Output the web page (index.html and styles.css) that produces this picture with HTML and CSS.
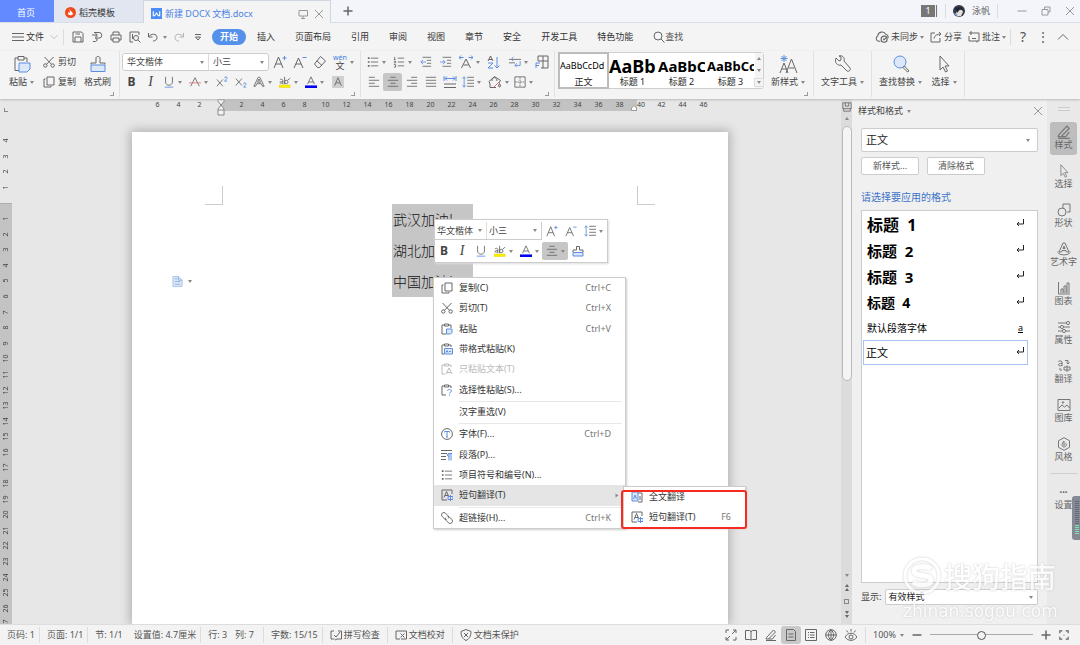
FILE: index.html
```html
<!DOCTYPE html>
<html lang="zh-CN">
<head>
<meta charset="utf-8">
<title>新建 DOCX 文档.docx</title>
<link rel="stylesheet" href="styles.css">
</head>
<body>
<svg class="sprite" aria-hidden="true">
  <symbol id="burger" viewBox="0 0 12 12"><path d="M0 2.500h12M0 6h12M0 9.500h12"/></symbol>
  <symbol id="chev-down" viewBox="0 0 12 12"><path d="M2 4l4 4 4-4"/></symbol>
  <symbol id="chev-up" viewBox="0 0 12 12"><path d="M1 8.500l5-5 5 5"/></symbol>
  <symbol id="save" viewBox="0 0 12 12"><path d="M1 1h8.500L11 2.500V11H1zM3 11V6h6v5M3.500 3h4.500"/></symbol>
  <symbol id="export" viewBox="0 0 12 12"><path d="M3 1.500h5a2.800 2.800 0 0 1 0 5.600H4.500M1 4h5M4.500 2.200L6.300 4 4.500 5.800M6.300 5.200L4.400 7.100l1.900 1.900M2 10.500h2.500l2-1.500"/></symbol>
  <symbol id="print" viewBox="0 0 12 12"><path d="M3 4V1h6v3M3 9H1V4h10v5H9M3 7h6v4H3z"/></symbol>
  <symbol id="preview" viewBox="0 0 12 12"><path d="M4 11H1V1h9v3M3.500 3v5"/><circle cx="7" cy="7" r="2.500"/><path d="M9 9l2.500 2.500"/></symbol>
  <symbol id="undo" viewBox="0 0 12 12"><path d="M1.500 2v4h4M1.500 6C4 2 10 2.500 10 6.500 10 9 8 10 6 10"/></symbol>
  <symbol id="redo" viewBox="0 0 12 12"><path d="M10.500 2v4h-4M10.500 6C8 2 2 2.500 2 6.500 2 9 4 10 6 10"/></symbol>
  <symbol id="more" viewBox="0 0 12 12"><path d="M3 3.500h6M3.500 6h5L6 9z"/></symbol>
  <symbol id="search" viewBox="0 0 12 12"><circle cx="5" cy="5" r="4"/><path d="M8 8l3.500 3.500"/></symbol>
  <symbol id="cloud" viewBox="0 0 13 12"><path d="M5 10H3.500A2.700 2.700 0 0 1 2.500 5 4 4 0 0 1 10 3.500C11.500 4 12.500 5.500 12 7"/><circle cx="8.500" cy="8" r="2.800"/><path d="M7.500 7.500l1 1 2-2"/></symbol>
  <symbol id="share" viewBox="0 0 12 12"><path d="M5 2H1v9h9V7M4 7.500C4.500 4.500 7 3 11 3M9 1l2 2-2 2"/></symbol>
  <symbol id="comment" viewBox="0 0 12 12"><path d="M5 2h6v8H1V5M3 0v4M1 2h4M4 7.500h4M9 10v1.500"/></symbol>
  <symbol id="scissors" viewBox="0 0 12 12"><circle cx="2.300" cy="9.500" r="1.700"/><circle cx="9.700" cy="9.500" r="1.700"/><path d="M3.500 8.300L10.500 1M8.500 8.300L1.500 1"/></symbol>
  <symbol id="copy" viewBox="0 0 12 12"><path d="M4 1h7v8H4zM2.500 3H1v8h7v-1"/></symbol>
  <symbol id="paste" viewBox="0 0 12 12"><path d="M3 2H1v9h4M8 2h2v3M3.500 1h4v2h-4z"/><path class="blue fill" d="M5.500 6H11v3.500L9.500 11h-4z"/></symbol>
  <symbol id="paste-fmt" viewBox="0 0 12 12"><path d="M3 2H1v9h2M8 2h2v2M3.500 1h4v2h-4z"/><path class="blue fill" d="M3.500 5.500h8V11h-8z"/><path class="blue" d="M5 9.500l1-2 1 2M8 8.500h2"/></symbol>
  <symbol id="paste-txt" viewBox="0 0 12 12"><path d="M3 2H1v9h3M8 2h2v2M3.500 1h4v2h-4zM5 11l3-6 3 6M6 9.500h4"/></symbol>
  <symbol id="paste-sp" viewBox="0 0 12 12"><path d="M3 2H1v9h4M8 2h2v2M3.500 1h4v2h-4z"/><path class="blue" d="M6.500 7c0-2 4-2 4 0 0 1.300-2 1.200-2 2.500M8.500 10.700v1"/></symbol>
  <symbol id="paste-big" viewBox="0 0 18 18"><path d="M5 3H2v12.500h4M11 3h3v4M5 1.500h6V5H5z"/><path class="blue fill" d="M6 8h11v6l-3 3H6z"/></symbol>
  <symbol id="brush" viewBox="0 0 18 18"><path d="M2 9.500V8h5V3c0-2 4-2 4 0v5h5v1.500"/><path class="blue fill" d="M2 10h14v6.500H2z"/></symbol>
  <symbol id="brush-sm" viewBox="0 0 12 12"><path d="M1 7V5h3.500V1.500h3V5H11v2"/><path class="blue fill" d="M1 7.500h10V11H1z"/></symbol>
  <symbol id="a-plus" viewBox="0 0 14 14"><path d="M1 13L5.500 2 10 13M2.800 9h5.400"/><path class="blue" d="M9.500 3h4M11.500 1v4"/></symbol>
  <symbol id="a-minus" viewBox="0 0 14 14"><path d="M1 13L5.500 3 10 13M2.800 9h5.400"/><path class="blue" d="M9.500 2.500h4"/></symbol>
  <symbol id="eraser" viewBox="0 0 14 14"><path d="M7.500 1.500l5 4.500-6 6.500h-2L1.500 9zM4 6l5 4.500"/></symbol>
  <symbol id="under" viewBox="0 0 14 14"><path d="M3 1v6c0 5 8 5 8 0V1"/><path class="blue" d="M2 13h10"/></symbol>
  <symbol id="strike" viewBox="0 0 14 14"><path d="M2 12L7 2l5 10"/><path class="red" d="M0 8h14"/></symbol>
  <symbol id="x-sup" viewBox="0 0 14 14"><path d="M1 4l7 8M8 4l-7 8"/><path class="blue" d="M10 2.500c0-2 3-2 3 0L10 6h3"/></symbol>
  <symbol id="x-sub" viewBox="0 0 14 14"><path d="M1 3l7 8M8 3l-7 8"/><path class="blue" d="M10 9.500c0-2 3-2 3 0L10 13h3"/></symbol>
  <symbol id="a-out" viewBox="0 0 14 14"><path d="M1 12L6 1.500h2L13 12h-2L9.700 9H4.300L3 12zM5.200 7.300h3.600L7 3.500z"/></symbol>
  <symbol id="hilite" viewBox="0 0 14 14"><path class="yellow" d="M0 10.500h13v3H0z"/><path d="M1 4.500c1-1.200 3.500-1 3.500 1v4M4.500 6.500c-4.500-.500-4.500 3 0 1.500M6.500 1v8.500"/><circle cx="8.500" cy="7" r="2"/><path d="M10 5l3-2.500"/></symbol>
  <symbol id="a-color" viewBox="0 0 14 14"><path d="M3 9.500L7 1l4 8.500M4.500 7h5"/><path class="ink" d="M0 11h14v3H0z"/></symbol>
  <symbol id="a-shade" viewBox="0 0 14 14"><path class="shade" d="M0 0h14v14H0z"/><path d="M3 11.500L7 2l4 9.500M4.500 8h5"/></symbol>
  <symbol id="bullets" viewBox="0 0 14 14"><path d="M4.500 2.500H13M4.500 7H13M4.500 11.500H13"/><path class="solid" d="M1 1.500h2v2H1zM1 6h2v2H1zM1 10.500h2v2H1z"/></symbol>
  <symbol id="numbers" viewBox="0 0 14 14"><path d="M5.500 2.500H13M5.500 7H13M5.500 11.500H13M2 1v3M1 4h2M1 6h2v2H1M1 10h2v3H1"/></symbol>
  <symbol id="outdent" viewBox="0 0 14 14"><path d="M3 1.500h10M8 5h5M8 8.500h5M3 12h10"/><path class="blue" d="M1 7h6M3.500 4.500L1 7l2.500 2.500"/></symbol>
  <symbol id="indent" viewBox="0 0 14 14"><path d="M3 1.500h10M8 5h5M8 8.500h5M3 12h10"/><path class="blue" d="M0 7h6M3.500 4.500L6 7 3.500 9.500"/></symbol>
  <symbol id="a-width" viewBox="0 0 14 14"><path d="M2.500 13L7 4l4.500 9M4.500 10h5"/><path class="blue" d="M0 2.500h4.500M2 .500l-2 2 2 2M9.500 2.500H14M12 .500l2 2-2 2"/></symbol>
  <symbol id="sort" viewBox="0 0 14 14"><path d="M1 6l2.500-5L6 6M2 4.500h3"/><path class="blue" d="M1 8h5l-5 5h5M10 2v11M7.500 10.500L10 13l2.500-2.500"/></symbol>
  <symbol id="wrap" viewBox="0 0 14 14"><path d="M0 4h14M0 8h7"/><path class="blue" d="M5 1L3 4l2 2M13 6v5H7M9 8.500L7 11l2 2"/></symbol>
  <symbol id="tabgrid" viewBox="0 0 14 14"><path d="M3 6V1h10v12H6M3 6h10M8 1v12"/><path class="blue" d="M1 13V8h4M1 10.500h3"/></symbol>
  <symbol id="al-l" viewBox="0 0 14 14"><path d="M1 1.500h7M1 5h12M1 8.500h7M1 12h12"/></symbol>
  <symbol id="al-c" viewBox="0 0 14 14"><path d="M4 1.500h6M1 5h12M4 8.500h6M1 12h12"/></symbol>
  <symbol id="al-r" viewBox="0 0 14 14"><path d="M6 1.500h7M1 5h12M6 8.500h7M1 12h12"/></symbol>
  <symbol id="al-j" viewBox="0 0 14 14"><path d="M1 1.500h12M1 5h12M1 8.500h12M1 12h12"/></symbol>
  <symbol id="al-d" viewBox="0 0 14 14"><path d="M1 9h12M1 12.500h12"/><path class="blue" d="M1 1v5M13 1v5M2 3.500h10M4 1.500l-2 2 2 2M10 1.500l2 2-2 2"/></symbol>
  <symbol id="spacing" viewBox="0 0 14 14"><path d="M6 1.500h8M6 5h8M6 8.500h8M6 12h8"/><path class="blue" d="M2.500 1v12M.500 3l2-2 2 2M.500 11l2 2 2-2"/></symbol>
  <symbol id="bucket" viewBox="0 0 14 14"><path d="M8 12.500H2V9L1 6.500 6.500 1.500l6 4L11 8M4 6c0-5 5-4 5 0M11.500 8.500c1.500 2 1 3.500 0 3.500s-1.500-1.500 0-3.500"/><path class="red" d="M6 12l5-5"/></symbol>
  <symbol id="borders" viewBox="0 0 14 14"><path d="M1 1h12v12H1z"/><path stroke-dasharray="2 1" d="M7 1v12M1 7h12"/></symbol>
  <symbol id="newstyle" viewBox="0 0 20 20"><path d="M2 18L6 8l4 10M3.500 14h5M8 18l5.500-14L19 18M10.500 13h6"/><path class="blue" d="M6 0v7M2.500 3.500h7M3.500 1l5 5M8.500 1l-5 5"/></symbol>
  <symbol id="wrench" viewBox="0 0 18 18"><path d="M2 3l3 3 2-1V2L5 1c3-1 6 1 5 5l6 7c1 2-1 4-3 3L7 10C4 11 0 8 2 3z"/></symbol>
  <symbol id="find" viewBox="0 0 18 18"><circle class="blue fill" cx="8" cy="7" r="6"/><path d="M12.500 11l4.500 5-1.500 1L11 12.500z"/></symbol>
  <symbol id="cursor" viewBox="0 0 18 18"><path d="M5 1l9 10h-4l2.500 5-2 1L8 12l-3 3z"/></symbol>
  <symbol id="font-t" viewBox="0 0 12 12"><circle cx="6" cy="6" r="5.400"/><path class="blue" d="M3.500 4.500V3.500h5v1M6 3.500V9M5 9h2"/></symbol>
  <symbol id="para" viewBox="0 0 12 12"><path d="M0 1.500h11M0 4.500h6M0 7.500h5M0 10.500h5"/><path class="blue" d="M8 4.500v7M10 4.500v7M11 4.500H8a1.500 1.500 0 0 0 0 3"/></symbol>
  <symbol id="trans" viewBox="0 0 12 12"><path d="M11 5V1H1v10h5M3 8.500l2.500-6 2 4.500M4 6.500h3"/><path class="blue" d="M7 7.500h5v3H7zM9.500 6v6"/></symbol>
  <symbol id="trans-all" viewBox="0 0 12 12"><path d="M7 2h4v9H7M9 5v4"/><path class="blue fill" d="M1 1h6v9H1z"/><path class="blue" d="M2.500 8L4 4l1.500 4"/></symbol>
  <symbol id="link" viewBox="0 0 12 12"><path d="M5.500 7.500L4 7.300 1.200 4.500a2.300 2.300 0 0 1 3.300-3.300L7 3.700c.900.900.700 1.900.300 2.600M6.500 4.500l1.500.200 2.800 2.800a2.300 2.300 0 0 1-3.300 3.300L5 8.300c-.900-.900-.700-1.900-.300-2.600"/></symbol>
  <symbol id="book" viewBox="0 0 12 12"><path d="M6 2v9M.500 1.500h4L6 2.500l1.500-1h4v9h-4L6 11l-1.500-.500h-4z"/></symbol>
  <symbol id="spell" viewBox="0 0 12 12"><path d="M4.500 10H1V2h3M8 2h3.500v8H7l-2 1M4 6l2 2 4-5"/></symbol>
  <symbol id="proof" viewBox="0 0 12 12"><path d="M5 10H1V2h10.500v8H6M5.500 4.500l4 4M9.500 4.500l-4 4"/></symbol>
  <symbol id="shield" viewBox="0 0 12 12"><path d="M6 .500l5 2c0 5-2 7.500-5 9-3-1.500-5-4-5-9zM4 4l4 4M8 4L4 8"/></symbol>
  <symbol id="expand" viewBox="0 0 12 12"><path d="M1 4V1h3M8 1h3v3M11 8v3H8M4 11H1V8M7 5l4-4M5 7l-4 4"/></symbol>
  <symbol id="pen" viewBox="0 0 12 12"><path d="M1.500 8.500L8.500 1l2 2-7 7H1zM3.500 10h4l3-4M1 11.500h10"/></symbol>
  <symbol id="page" viewBox="0 0 12 12"><path d="M1.500.500h7l2 2v9h-9zM3.500 5h5M3.500 8h5"/></symbol>
  <symbol id="outline" viewBox="0 0 12 12"><path d="M.500.500h11v11H.500zM3 3.500h1M5 3.500h4.500M3 6h1M5 6h4.500M3 8.500h1M5 8.500h4.500"/></symbol>
  <symbol id="globe" viewBox="0 0 12 12"><circle cx="6" cy="6" r="5.300"/><path d="M.700 6h10.600M6 .700v10.600M6 .700C2.500 4 2.500 8 6 11.300M6 .700C9.500 4 9.500 8 6 11.300"/></symbol>
  <symbol id="eye" viewBox="0 0 12 12"><path d="M0 8c3-5 9-5 12 0-3 4.500-9 4.500-12 0zM6 0v2.500M1.500 1.500l1.500 2M10.500 1.500L9 3.500"/><circle cx="6" cy="8" r="2"/></symbol>
  <symbol id="focus" viewBox="0 0 12 12"><path d="M1 4V1h3M8 1h3v3M11 8v3H8M4 11H1V8M5.500 6h1"/></symbol>
  <symbol id="minus" viewBox="0 0 12 12"><path d="M1.500 6h9"/></symbol>
  <symbol id="plus" viewBox="0 0 12 12"><path d="M1.500 6h9M6 1.500v9"/></symbol>
  <symbol id="close" viewBox="0 0 12 12"><path d="M2 2l8 8M10 2l-8 8"/></symbol>
  <symbol id="restore" viewBox="0 0 12 12"><path d="M2 4.500h6V10H2zM4.500 4.500V2H10v5H8"/></symbol>
  <symbol id="monitor" viewBox="0 0 12 12"><path d="M2 2.500h8.500V8H2zM6 8v2M4 10.500h4"/></symbol>
  <symbol id="shapes" viewBox="0 0 14 14"><path d="M6 5V1h7v8h-3"/><circle cx="5" cy="9" r="4"/></symbol>
  <symbol id="wordart" viewBox="0 0 14 14"><path d="M2 10L6 1h2l4 9H9.500L9 8.500H5L4.500 10zM6 6.500h2L7 4zM1 9.500c-1 4.500 13 4.500 12 0"/></symbol>
  <symbol id="chart" viewBox="0 0 14 14"><path d="M1.500 1v12H13M4 12V8h2v4M7 12V5h2v7M10 12V2h2v10"/></symbol>
  <symbol id="props" viewBox="0 0 14 14"><path d="M1 3h8M1 7h2M6.500 7H13M1 11h4M8.500 11H13"/><circle cx="11" cy="3" r="1.600"/><circle cx="5" cy="7" r="1.600"/><circle cx="7" cy="11" r="1.600"/></symbol>
  <symbol id="trans2" viewBox="0 0 14 14"><path d="M1.500 3c0-1.500 3.500-1.500 3.500 0v4M5 4.500c-5-.500-4.500 3.500 0 2M7 8h6v3H7zM10 6.500V13M8 1.500h3v3M9.500 3.500l1.500 1.500L12.500 3.500M3 9v2h2"/></symbol>
  <symbol id="picture" viewBox="0 0 14 14"><path d="M1 1.500h12v11H1zM2 10l3-3 2.500 2L10 7l2.500 3"/><circle cx="6" cy="4.500" r=".800"/></symbol>
  <symbol id="hex" viewBox="0 0 14 14"><path d="M7 .700l5.500 3v6.600l-5.500 3-5.500-3V3.700zM7 4v5"/><path d="M7 4C4 7 5 10 7 10s3-2 1.500-4"/></symbol>
  <symbol id="ret" viewBox="0 0 10 10"><path d="M8.500 1v5H2M4 4L2 6l2 2"/></symbol>
  <symbol id="disk" viewBox="0 0 12 12"><path d="M1 1h10v7H1zM4 1v4h4V1M2 8v3h8V8"/></symbol>
  <symbol id="dbl-down" viewBox="0 0 6 8"><path class="solid" d="M1 0h4L3 3zM1 4h4L3 7z"/></symbol>
  <symbol id="dbl-up" viewBox="0 0 6 8"><path class="solid" d="M1 3h4L3 0zM1 7h4L3 4z"/></symbol>
</svg>

<header class="titlebar">
  <button class="tab home">首页</button>
  <button class="tab store"><svg class="logo" viewBox="0 0 12 12"><circle cx="6" cy="6" r="6" fill="#f04a1d"/><path d="M5 2c1 3 4 4 3.500 6-.500 1.500-4 1.500-5 0C3 6 4 6 4.200 5c1 1 1 2 1.300 2C6.200 5 4.500 4 5 2z" fill="#fff"/></svg>稻壳模板</button>
  <div class="tab doc"><svg class="logo" viewBox="0 0 12 12"><path d="M0 0h12v12H0z" fill="#4c8df5"/><path d="M2.500 3.500v5H4l2-3 2 3h1.500v-5" fill="none" stroke="#fff" stroke-width="1.200"/></svg><span class="name">新建 DOCX 文档.docx</span>
    <button aria-label="显示"><svg class="i12"><use href="#monitor"/></svg></button><button aria-label="关闭标签"><svg class="i12"><use href="#close"/></svg></button></div>
  <button class="add" aria-label="新建"><svg class="i12"><use href="#plus"/></svg></button>
  <div class="account">
    <span class="badge">1</span><i class="vr"></i>
    <svg class="avatar" viewBox="0 0 12 12"><circle cx="6" cy="6" r="6" fill="#343847"/><path d="M4 5l5-1 1 3-2 4-4 .500L3 8z" fill="#e6ded9"/><path d="M2 3l6-1 3 4-4-1.500L4 8z" fill="#222638"/><path d="M1 8l3 1 1 3-3-2z" fill="#7ba2e3"/></svg>
    <span>泳帆</span><i class="vr"></i>
  </div>
  <div class="winctl"><button aria-label="最小化"><svg class="i12"><use href="#minus"/></svg></button><button aria-label="还原"><svg class="i12"><use href="#restore"/></svg></button><button aria-label="关闭"><svg class="i12"><use href="#close"/></svg></button></div>
</header>

<nav class="menubar">
  <button class="file"><svg class="i12"><use href="#burger"/></svg>文件</button>
  <button class="q pale" aria-label="展开"><svg class="i10"><use href="#chev-down"/></svg></button><i class="vr"></i>
  <div class="quick">
    <button class="q" aria-label="保存"><svg class="i12"><use href="#save"/></svg></button><button class="q" aria-label="输出"><svg class="i12"><use href="#export"/></svg></button><button class="q" aria-label="打印"><svg class="i12"><use href="#print"/></svg></button><button class="q" aria-label="预览"><svg class="i12"><use href="#preview"/></svg></button><button class="q drop" aria-label="撤销"><svg class="i12"><use href="#undo"/></svg><i class="caret"></i></button><button class="q pale" aria-label="恢复"><svg class="i12"><use href="#redo"/></svg></button><button class="q" aria-label="更多"><svg class="i12"><use href="#more"/></svg></button>
  </div>
  <button class="pill">开始</button>
  <div class="menus"><button>插入</button><button>页面布局</button><button>引用</button><button>审阅</button><button>视图</button><button>章节</button><button>安全</button><button>开发工具</button><button>特色功能</button><button class="lookup"><svg class="i12"><use href="#search"/></svg>查找</button></div>
  <div class="cloud">
    <button><svg class="i14"><use href="#cloud"/></svg>未同步<i class="caret"></i></button><button><svg class="i12"><use href="#share"/></svg>分享</button><button><svg class="i12"><use href="#comment"/></svg>批注<i class="caret"></i></button>
  </div><i class="vr"></i>
  <div class="help"><button class="question">?</button><button class="dots">⋮</button><button aria-label="收起"><svg class="i12"><use href="#chev-up"/></svg></button></div>
</nav>

<section class="ribbon">
  <div class="group clip">
    <button class="big"><svg class="i18"><use href="#paste-big"/></svg><span>粘贴<i class="caret"></i></span></button>
    <div class="pair"><button><svg class="i12"><use href="#scissors"/></svg>剪切</button><button><svg class="i12"><use href="#copy"/></svg>复制</button></div>
    <button class="big"><svg class="i18"><use href="#brush"/></svg><span>格式刷</span></button>
    <i class="corner"></i>
  </div>
  <div class="group font">
    <div class="row">
      <div class="combos"><label class="combo face"><select aria-label="字体"><option>华文楷体</option></select><i class="caret"></i></label><label class="combo size"><select aria-label="字号"><option>小三</option></select><i class="caret"></i></label></div>
      <button class="t wide" aria-label="增大字号"><svg class="i14"><use href="#a-plus"/></svg></button><button class="t wide" aria-label="减小字号"><svg class="i14"><use href="#a-minus"/></svg></button><button class="t wide" aria-label="清除格式"><svg class="i14"><use href="#eraser"/></svg></button><button class="t d"><span class="pinyin"><b>wén</b><span>文</span></span><i class="caret"></i></button>
    </div>
    <div class="row">
      <button class="t glyph"><b>B</b></button><button class="t glyph"><em>I</em></button><button class="t d" aria-label="下划线"><svg class="i12"><use href="#under"/></svg><i class="caret"></i></button><button class="t d" aria-label="删除线"><svg class="i12"><use href="#strike"/></svg><i class="caret"></i></button><button class="t" aria-label="上标"><svg class="i12"><use href="#x-sup"/></svg></button><button class="t" aria-label="下标"><svg class="i12"><use href="#x-sub"/></svg></button><button class="t d" aria-label="文字效果"><svg class="i12"><use href="#a-out"/></svg><i class="caret"></i></button><button class="t d" aria-label="突出显示"><svg class="i12"><use href="#hilite"/></svg><i class="caret"></i></button><button class="t d" aria-label="字体颜色"><svg class="i12"><use href="#a-color"/></svg><i class="caret"></i></button><button class="t" aria-label="字符底纹"><svg class="i12"><use href="#a-shade"/></svg></button>
    </div>
    <i class="corner"></i>
  </div>
  <div class="group paragraph">
    <div class="row">
      <button class="t d" aria-label="项目符号"><svg class="i12"><use href="#bullets"/></svg><i class="caret"></i></button><button class="t d" aria-label="编号"><svg class="i12"><use href="#numbers"/></svg><i class="caret"></i></button><button class="t wide" aria-label="减少缩进"><svg class="i12"><use href="#outdent"/></svg></button><button class="t wide" aria-label="增加缩进"><svg class="i12"><use href="#indent"/></svg></button><button class="t d" aria-label="中文版式"><svg class="i14"><use href="#a-width"/></svg><i class="caret"></i></button><button class="t wider" aria-label="排序"><svg class="i14"><use href="#sort"/></svg></button><button class="t d" aria-label="换行"><svg class="i12"><use href="#wrap"/></svg><i class="caret"></i></button><button class="t" aria-label="制表位"><svg class="i14"><use href="#tabgrid"/></svg></button>
    </div>
    <div class="row">
      <button class="t" aria-label="左对齐"><svg class="i12"><use href="#al-l"/></svg></button><button class="t on" aria-label="居中"><svg class="i12"><use href="#al-c"/></svg></button><button class="t" aria-label="右对齐"><svg class="i12"><use href="#al-r"/></svg></button><button class="t" aria-label="两端对齐"><svg class="i12"><use href="#al-j"/></svg></button><button class="t" aria-label="分散对齐"><svg class="i14"><use href="#al-d"/></svg></button><button class="t d" aria-label="行距"><svg class="i12"><use href="#spacing"/></svg><i class="caret"></i></button><button class="t d" aria-label="底纹"><svg class="i14"><use href="#bucket"/></svg><i class="caret"></i></button><button class="t d" aria-label="边框"><svg class="i12"><use href="#borders"/></svg><i class="caret"></i></button>
    </div>
    <i class="corner"></i>
  </div>
  <div class="group styles">
    <div class="gallery">
      <button class="current"><span class="sample">AaBbCcDd</span><span>正文</span></button>
      <button><span class="sample s1">AaBb</span><span>标题 1</span></button>
      <button><span class="sample s2">AaBbC</span><span>标题 2</span></button>
      <button><span class="sample s3">AaBbCc</span><span>标题 3</span></button>
      <div class="spin"><i class="caret up"></i><i class="caret"></i><i class="caret bar"></i></div>
    </div>
    <button class="big"><svg class="i20"><use href="#newstyle"/></svg><span>新样式<i class="caret"></i></span></button>
    <i class="corner"></i>
  </div>
  <div class="group tools"><button class="big"><svg class="i18"><use href="#wrench"/></svg><span>文字工具<i class="caret"></i></span></button></div>
  <div class="group tools"><button class="big"><svg class="i18"><use href="#find"/></svg><span>查找替换<i class="caret"></i></span></button><button class="big"><svg class="i18"><use href="#cursor"/></svg><span>选择<i class="caret"></i></span></button></div>
</section>

<main class="main">
  <div class="vruler"><span class="origin"></span>
    <div class="vticks"><span>4</span><span>3</span><span>2</span><span>1</span><span></span><span>1</span><span>2</span><span>3</span><span>4</span><span>5</span><span>6</span><span>7</span><span>8</span><span>9</span><span>10</span><span>11</span><span>12</span><span>13</span><span>14</span><span>15</span><span>16</span><span>17</span><span>18</span><span>19</span><span>20</span><span>21</span><span>22</span><span>23</span><span>24</span><span>25</span><span>26</span><span>27</span></div>
  </div>
  <div class="work">
    <div class="hruler"><span>6</span><span>4</span><span>2</span><span class="zero"><svg viewBox="0 0 10 18"><path d="M2 .500h6v2L5 6 2 2.500zM5 6l3 4v6H2v-6zM2 11h6"/></svg></span><span>2</span><span>4</span><span>6</span><span>8</span><span>10</span><span>12</span><span>14</span><span>16</span><span>18</span><span>20</span><span>22</span><span>24</span><span>26</span><span>28</span><span>30</span><span>32</span><span>34</span><span>36</span><span>38</span><span class="end"><svg viewBox="0 0 6 6"><path d="M.500 5.500V3L3 .500 5.500 3v2.500z"/></svg>40</span><span>42</span><span>44</span><span>46</span></div>
    <article class="page">
      <div class="margins"><i class="crop left"></i><i class="crop right"></i></div>
      <div class="text"><p>武汉加油!</p><p>湖北加油!</p><p>中国加油!</p></div>
      <div class="pasteopt"><svg viewBox="0 0 12 12"><path d="M1 .500h6l4 4v7H1z" fill="#dbe6f7" stroke="#a9c2e8"/><path d="M3 3h3M3 6h6M3 9h6M7 .500v4h4" stroke="#8fb0e0" fill="none"/></svg><i class="caret"></i></div>
    </article>
  </div>
  <div class="scroll">
    <svg class="i10"><use href="#disk"/></svg><i class="caret up"></i><div class="thumb"></div>
    <div class="jump"><i class="caret"></i><svg><use href="#dbl-up"/></svg><i class="dot"></i><svg><use href="#dbl-down"/></svg></div>
  </div>
  <aside class="panel">
    <div class="head"><span>样式和格式<i class="caret"></i></span><button aria-label="关闭窗格"><svg class="i12"><use href="#close"/></svg></button></div>
    <label class="combo current-style"><select aria-label="当前样式"><option>正文</option></select><i class="caret"></i></label>
    <div class="actions"><button>新样式...</button><button>清除格式</button></div>
    <h2>请选择要应用的格式</h2>
    <ul class="list">
      <li class="h h1"><span>标题&nbsp; 1</span><svg><use href="#ret"/></svg></li>
      <li class="h h2"><span>标题&nbsp; 2</span><svg><use href="#ret"/></svg></li>
      <li class="h h3"><span>标题&nbsp; 3</span><svg><use href="#ret"/></svg></li>
      <li class="h h4"><span>标题&nbsp; 4</span><svg><use href="#ret"/></svg></li>
      <li class="dflt"><span>默认段落字体</span><u>a</u></li>
      <li class="sel"><span>正文</span><svg><use href="#ret"/></svg></li>
    </ul>
    <div class="show"><label for="show">显示:</label><span class="combo"><select id="show"><option>有效样式</option></select><i class="caret"></i></span></div>
  </aside>
  <nav class="side">
    <i class="grip"></i>
    <button class="on"><svg class="i14"><use href="#pen"/></svg>样式</button>
    <button><svg class="i14"><use href="#cursor"/></svg>选择</button>
    <button><svg class="i14"><use href="#shapes"/></svg>形状</button>
    <button><svg class="i14"><use href="#wordart"/></svg>艺术字</button>
    <button><svg class="i14"><use href="#chart"/></svg>图表</button>
    <button><svg class="i14"><use href="#props"/></svg>属性</button>
    <button><svg class="i14"><use href="#trans2"/></svg>翻译</button>
    <button><svg class="i14"><use href="#picture"/></svg>图库</button>
    <button><svg class="i14"><use href="#hex"/></svg>风格</button>
    <i class="line"></i>
    <button class="set"><span>•••</span>设置</button>
  </nav>
</main>

<footer class="status">
  <span>页码: 1</span><i class="vr"></i><span>页面: 1/1</span><i class="vr"></i><span class="gap">节: 1/1</span><span>设置值: 4.7厘米</span><i class="vr"></i><span>行: 3</span><span class="col">列: 7</span><i class="vr"></i><span>字数: 15/15</span><i class="vr"></i>
  <button><svg class="i12"><use href="#spell"/></svg>拼写检查</button><i class="vr"></i><button><svg class="i12"><use href="#proof"/></svg>文档校对</button><i class="vr"></i><button><svg class="i12"><use href="#shield"/></svg>文档未保护</button>
  <div class="views"><button aria-label="全屏"><svg class="i12"><use href="#expand"/></svg></button><button aria-label="阅读"><svg class="i12"><use href="#book"/></svg></button><button aria-label="写作"><svg class="i12"><use href="#pen"/></svg></button><button class="on" aria-label="页面"><svg class="i12"><use href="#page"/></svg></button><button aria-label="大纲"><svg class="i12"><use href="#outline"/></svg></button><button aria-label="网页"><svg class="i12"><use href="#globe"/></svg></button><button aria-label="护眼"><svg class="i12"><use href="#eye"/></svg></button></div>
  <i class="vr"></i>
  <div class="zoom"><button class="pct">100%<i class="caret"></i></button><button aria-label="缩小"><svg class="i12"><use href="#minus"/></svg></button><input type="range" min="0" max="100" value="50" aria-label="缩放"><button aria-label="放大"><svg class="i12"><use href="#plus"/></svg></button><button aria-label="适合页面"><svg class="i10"><use href="#focus"/></svg></button></div>
</footer>

<div class="mini">
  <div class="row"><div class="combos"><label class="combo face"><select aria-label="字体"><option>华文楷体</option></select><i class="caret"></i></label><label class="combo size"><select aria-label="字号"><option>小三</option></select><i class="caret"></i></label></div><button class="t" aria-label="增大"><svg class="i12"><use href="#a-plus"/></svg></button><button class="t" aria-label="减小"><svg class="i12"><use href="#a-minus"/></svg></button><button class="t d" aria-label="行距"><svg class="i12"><use href="#spacing"/></svg><i class="caret"></i></button></div>
  <div class="row"><button class="t glyph"><b>B</b></button><button class="t glyph"><em>I</em></button><button class="t" aria-label="下划线"><svg class="i12"><use href="#under"/></svg></button><button class="t d" aria-label="突出显示"><svg class="i12"><use href="#hilite"/></svg><i class="caret"></i></button><button class="t d" aria-label="颜色"><svg class="i12"><use href="#a-color"/></svg><i class="caret"></i></button><button class="t d on" aria-label="居中"><svg class="i12"><use href="#al-c"/></svg><i class="caret"></i></button><button class="t" aria-label="格式刷"><svg class="i12"><use href="#brush-sm"/></svg></button></div>
</div>

<div class="menu context">
  <button><svg class="i12"><use href="#copy"/></svg><span>复制(C)</span><kbd>Ctrl+C</kbd></button>
  <button><svg class="i12"><use href="#scissors"/></svg><span>剪切(T)</span><kbd>Ctrl+X</kbd></button>
  <button><svg class="i12"><use href="#paste"/></svg><span>粘贴</span><kbd>Ctrl+V</kbd></button>
  <button><svg class="i12"><use href="#paste-fmt"/></svg><span>带格式粘贴(K)</span></button>
  <button class="off" disabled><svg class="i12"><use href="#paste-txt"/></svg><span>只粘贴文本(T)</span></button>
  <button><svg class="i12"><use href="#paste-sp"/></svg><span>选择性粘贴(S)...</span></button>
  <hr>
  <button><svg class="i12"></svg><span>汉字重选(V)</span></button>
  <hr>
  <button><svg class="i12"><use href="#font-t"/></svg><span>字体(F)...</span><kbd>Ctrl+D</kbd></button>
  <button><svg class="i12"><use href="#para"/></svg><span>段落(P)...</span></button>
  <button><svg class="i12"><use href="#bullets"/></svg><span>项目符号和编号(N)...</span></button>
  <button class="hot"><svg class="i12"><use href="#trans"/></svg><span>短句翻译(T)</span><i class="caret side-caret"></i></button>
  <hr>
  <button><svg class="i12"><use href="#link"/></svg><span>超链接(H)...</span><kbd>Ctrl+K</kbd></button>
</div>
<div class="menu sub">
  <button><svg class="i12"><use href="#trans-all"/></svg><span>全文翻译</span></button>
  <button><svg class="i12"><use href="#trans"/></svg><span>短句翻译(T)</span><kbd>F6</kbd></button>
</div>
<div class="mark"></div>
<div class="widget"><i></i></div>
<div class="watermark">
  <div><svg viewBox="0 0 38 38"><circle cx="19" cy="19" r="17" fill="none" stroke="#fff" stroke-width="3"/><path d="M28 12c-5-4-17-3-17 2 0 6 17 3 17 9 0 6-13 6-18 2" fill="none" stroke="#fff" stroke-width="5"/></svg><span>搜狗指南</span></div>
  <p>zhinan.sogou.com</p>
</div>
</body>
</html>
```
FILE: styles.css
```css
* { box-sizing: border-box; }
body {
  margin: 0; height: 100vh; display: flex; flex-direction: column; overflow: hidden; position: relative;
  font: 9px/12px "Noto Sans", "Noto Sans CJK SC", sans-serif; color: #444; background: #e7e7e7;
}
button, select, input { font: inherit; color: inherit; margin: 0; }
button { border: 0; padding: 0; background: none; display: flex; align-items: center; justify-content: center; white-space: nowrap; flex: none; }
p, ul, h2 { margin: 0; padding: 0; }
svg { fill: none; stroke: #666; flex: none; display: block; overflow: visible; }
.sprite { position: absolute; width: 0; height: 0; }
.i10 { width: 10px; height: 10px; }
.i12 { width: 12px; height: 12px; }
.i14 { width: 14px; height: 14px; }
.i18 { width: 18px; height: 18px; }
.i20 { width: 20px; height: 20px; }
.blue { stroke: #5b8ee0; }
.fill { fill: #dce8fa; }
.red { stroke: #e07070; }
.yellow { fill: #ffee00; stroke: #d8d000; stroke-width: .5; }
.ink { fill: #0000f0; stroke: none; }
.shade { fill: #d0d0d0; stroke: none; }
.solid { fill: #666; stroke: none; }
.caret { display: inline-block; flex: none; width: 0; height: 0; border: 2px solid transparent; border-top: 3px solid #888; border-bottom: 0; }
.caret.up { transform: rotate(180deg); }
.vr { flex: none; width: 1px; align-self: stretch; background: #dcdcdc; }

/* title bar */
.titlebar { flex: none; height: 23px; display: flex; background: #f3f5fb; border-bottom: 1px solid #d9dfe9; }
.tab { flex: none; display: flex; align-items: center; gap: 3px; padding-top: 3px; }
.home { width: 54px; padding-right: 2px; background: #638bff; color: #fff; }
.store { width: 89px; background: #e1e6f1; justify-content: flex-start; padding-left: 11px; color: #333; }
.doc { width: 188px; margin-bottom: -1px; padding-left: 7px; background: #f4f4f4; border: 1px solid #cfd5e1; border-bottom: 0; }
.doc .name { flex: 1; color: #4a82e4; }
.doc button { width: 13px; }
.doc button svg { stroke: #999; }
.doc button:last-child { margin-right: 5px; }
.logo { width: 11px; height: 11px; stroke: none; }
.add { width: 34px; }
.add svg { stroke-width: 1.5; }
.account { display: flex; margin-left: auto; align-items: center; gap: 7px; color: #666; }
.account .vr { height: 14px; align-self: center; }
.badge { width: 17px; height: 12px; background: #777; color: #fff; text-align: center; border-right: 3px double #eee; }
.avatar { width: 12px; height: 12px; stroke: none; }
.winctl { display: flex; gap: 12px; margin: 0 4px 0 18px; }
.winctl svg { stroke: #999; }

/* menu bar */
.menubar { flex: none; height: 28px; display: flex; align-items: center; padding-left: 12px; background: #f4f4f4; color: #333; }
.menubar .vr { height: 16px; align-self: center; }
.file { gap: 2px; }
.q { width: 19px; }
.pale { opacity: .45; }
.q.drop { width: 25px; gap: 4px; }
.quick { display: flex; padding-left: 4px; margin-right: 5px; }
.pill { width: 34px; height: 16px; border-radius: 8px; background: #5590ea; color: #fff; font-weight: 700; }
.menus { display: flex; gap: 20px; margin-left: 11px; }
.lookup { color: #555; }
.cloud { display: flex; gap: 6px; margin: 0 4px 0 auto; color: #444; }
.cloud button { gap: 2px; }
.help { display: flex; padding: 0 10px 0 5px; gap: 6px; color: #555; }
.help button { width: 14px; }
.question { font-size: 14px; }
.dots { font-size: 12px; }

/* ribbon */
.ribbon { flex: none; height: 48px; display: flex; background: #f4f4f4; box-shadow: 0 1px 2px #bbb; position: relative; }
.group { position: relative; flex: none; border-right: 1px solid #e2e2e2; height: 46px; }
.corner { position: absolute; right: 5px; bottom: 1px; width: 4px; height: 4px; border: solid #999; border-width: 0 1px 1px 0; }
.big { flex-direction: column; gap: 3px; justify-content: flex-start; padding-top: 4px; }
.big span { display: flex; align-items: center; gap: 3px; }
.clip { display: flex; width: 120px; padding-left: 8px; gap: 8px; }
.clip .pair { display: grid; grid-template-rows: 20px 20px; padding-top: 1px; }
.clip .big { width: 27px; }
.pair button { gap: 3px; }
.row { display: flex; align-items: center; height: 20px; }
.font { width: 241px; padding: 1px 0 0 2px; }
.paragraph { width: 194px; padding: 1px 0 0 3px; }
.t { width: 19px; height: 18px; border-radius: 2px; }
.t.wide { width: 20px; }
.t.wider { width: 24px; }
.t.d { width: 26px; gap: 3px; justify-content: flex-start; padding-left: 3px; }
.t.on { background: #c6c6c6; }
.glyph { font-size: 12px; }
.glyph em { font-family: "Liberation Serif", serif; font-size: 14px; }
.combo { display: grid; grid-template-columns: 1fr 8px; align-items: center; background: #fff; }
.combo select { grid-area: 1 / 1 / 2 / 3; appearance: none; border: 0; outline: 0; background: none; padding: 0 0 0 4px; width: 100%; height: 100%; }
.combo .caret { grid-area: 1 / 2; }
.combos { display: flex; flex: none; height: 18px; border: 1px solid #ccc; border-radius: 3px; overflow: hidden; }
.font .face { width: 86px; border-right: 1px solid #ddd; }
.font .size { width: 59px; }
.font .combos { margin-right: 1px; }
.pinyin { display: flex; flex-direction: column; align-items: center; width: 14px; line-height: 10px; }
.pinyin b { font-weight: 400; font-size: 7px; line-height: 7px; color: #3f7de0; }
.styles { width: 259px; display: flex; padding: 1px 0 0 3px; }
.styles .big { padding: 3px 0 0 7px; gap: 1px; }
.gallery { display: flex; height: 37px; border: 1px solid #cfcfcf; border-radius: 3px; background: #fff; }
.gallery button { width: 49px; flex-direction: column; padding: 2px 1px 0; overflow: hidden; color: #222; line-height: 12px; }
.gallery .current { outline: 2px solid #bcbcbc; outline-offset: -1px; }
.sample { width: 100%; height: 22px; line-height: 22px; overflow: hidden; color: #000; font-size: 9px; text-align: left; }
.s1 { font-weight: 700; font-size: 18px; }
.s2 { font-weight: 700; font-size: 15px; }
.s3 { font-weight: 700; font-size: 13px; }
.spin { width: 8px; display: flex; flex-direction: column; align-items: center; justify-content: space-around; background: #f4f4f4; }
.bar { outline: 1px solid #ddd; outline-offset: 2px; }
.tools { display: flex; padding: 0 7px; gap: 9px; }
.tools .big { min-width: 26px; }

/* work area */
.main { flex: 1; min-height: 0; display: flex; font-size: 9px; }
.vruler { width: 12px; flex: none; overflow: hidden; display: flex; flex-direction: column; font-size: 7px; background: linear-gradient(#e7e7e7 104px, #999 104px, #c3c3c3 105px); }
.origin { width: 4px; height: 4px; margin: 9px 0 21px 4px; border: solid #888; border-width: 0 0 1px 1px; flex: none; }
.vticks { flex: 1; margin-bottom: -8px; display: flex; flex-direction: column; }
.vticks span { flex: 1; min-height: 0; display: flex; align-items: center; justify-content: center; writing-mode: vertical-rl; transform: rotate(180deg); line-height: 12px; }
.work { flex: 1; min-width: 0; display: flex; flex-direction: column; overflow: hidden; }
.hruler { flex: none; height: 12px; display: flex; padding-left: 135px; font-size: 7px; background: linear-gradient(90deg, transparent 209px, #c3c3c3 209px, #c3c3c3 625px, transparent 625px); }
.hruler span { width: 21px; flex: none; text-align: center; line-height: 12px; }
.zero svg { width: 10px; height: 18px; margin-left: 6px; stroke: #888; fill: #f4f4f4; }
.hruler .end { display: flex; align-items: flex-end; justify-content: center; margin-left: -5px; width: 26px; }
.end svg { width: 6px; height: 6px; stroke: #999; fill: #fff; }
.page { flex: 1; margin: 21px 113px 0 120px; background: #fff; box-shadow: 0 0 10px 2px #b0b0b0; }
.margins { display: flex; justify-content: space-between; padding: 54px 73px 0; }
.crop { width: 18px; height: 19px; border: solid #ccc; border-width: 0 1px 1px 0; }
.crop.right { border-width: 0 0 1px 1px; }
.text { width: 81px; margin: -1px 0 0 calc(50% - 38px); padding-left: 1px; background: #c6c6c6; font: 300 14px/31px "Noto Sans CJK SC", sans-serif; color: #111; }
.pasteopt { display: flex; align-items: center; gap: 5px; margin: -21px 0 0 40px; }
.pasteopt svg { width: 11px; height: 11px; }

.scroll { width: 11px; flex: none; background: #dcdcdc; display: flex; flex-direction: column; align-items: center; padding-top: 3px; }
.scroll > .caret { margin: 5px 0 6px; }
.thumb { width: 10px; flex: 0 1 255px; border: 1px solid #bbb; border-radius: 5px; background: #f4f4f4; }
.jump { margin-top: auto; display: flex; flex-direction: column; align-items: center; gap: 7px; padding-bottom: 5px; }
.jump .dot { width: 5px; height: 5px; border: 1px solid #888; }
.jump svg { width: 6px; height: 8px; }

/* task pane */
.panel { width: 195px; flex: none; background: #f0f0f0; display: flex; flex-direction: column; padding: 0 9px 19px; }
.head { height: 24px; display: flex; align-items: center; justify-content: space-between; margin: 0 -6px 5px -3px; flex: none; }
.head span { display: flex; align-items: center; gap: 4px; }
.head svg { stroke: #999; }
.panel .combo { border: 1px solid #ccc; border-radius: 2px; }
.current-style { height: 24px; flex: none; font-size: 11px; color: #222; }
.panel .current-style { grid-template-columns: 1fr 11px; }
.actions { display: flex; gap: 8px; margin: 5px 0 16px; }
.actions button { width: 58px; height: 18px; background: #fff; border: 1px solid #ccc; border-radius: 2px; color: #555; }
.panel h2 { font-size: 10px; line-height: 13px; font-weight: 400; color: #3f74c9; margin-bottom: 6px; }
.list { flex: 1; min-height: 0; background: #fff; border: 1px solid #ccc; list-style: none; padding: 1px 9px 0 1px; color: #000; }
.list li { display: flex; align-items: center; justify-content: space-between; padding: 0 3px 0 4px; height: 26px; }
.list svg { width: 10px; height: 10px; stroke: #222; margin-bottom: 4px; }
.list .h { font-weight: 700; }
.list .h1 { font-size: 16px; }
.list .h2, .list .h3 { font-size: 15px; }
.list .h4 { font-size: 14px; }
.list .dflt { height: 24px; font-size: 10px; }
.dflt u { padding-right: 2px; font-size: 9px; }
.list .sel { height: 25px; border: 1px solid #a9c3ec; padding: 0 2px; font-size: 11px; }
.show { display: flex; align-items: center; gap: 4px; margin-top: 6px; }
.show .combo { flex: 1; height: 16px; color: #222; }
.show select { padding-left: 2px; }

.side { width: 33px; flex: none; display: flex; flex-direction: column; align-items: center; background: #e9e9e9; color: #666; }
.side svg { stroke: #777; }
.grip { width: 12px; height: 4px; margin: 8px 0 11px; border: solid #ccc; border-width: 1px 0; }
.side button { width: 27px; height: 33px; flex-direction: column; margin-bottom: 6px; padding-bottom: 2px; border-radius: 3px; }
.side .on { background: #bdbdbd; }
.line { width: 28px; height: 1px; background: #d0d0d0; }
.side .set { margin-top: 9px; }
.set span { font-size: 7px; }

/* status bar */
.status { flex: none; height: 21px; border-top: 1px solid #ddd; background: #f3f3f3; display: flex; align-items: center; padding-left: 7px; color: #555; white-space: nowrap; }
.status > .vr { height: 16px; align-self: center; margin: 0 7px 0 4px; }
.status > .gap { margin-right: 11px; }
.status > span:has(+ .col) { padding-right: 8px; }
.status > .col { padding-right: 5px; }
.status > button { gap: 2px; margin-right: 3px; }
.views { display: flex; margin-left: auto; }
.views button { width: 20px; height: 18px; border-radius: 3px; }
.views .on { background: #c9c9c9; }
.zoom { display: flex; align-items: center; gap: 7px; padding-right: 11px; }
.pct { gap: 4px; }
.zoom input { appearance: none; width: 103px; height: 12px; background: linear-gradient(transparent 5px, #aaa 5px, #aaa 6px, transparent 6px); }
.zoom input::-webkit-slider-thumb { appearance: none; width: 9px; height: 9px; border: 1px solid #555; border-radius: 50%; background: #f3f3f3; }
.zoom svg { stroke-width: 1.5; }

/* floating layers */
.mini { position: absolute; left: 434px; top: 219px; width: 174px; padding: 1px 0; background: #fff; border: 1px solid #ccc; box-shadow: 1px 1px 2px #ddd; }
.mini .combos { border-radius: 0; border-width: 0 1px 1px 0; }
.mini .face { width: 52px; border-right: 1px solid #ddd; }
.mini .size { width: 54px; }
.mini .combo select { padding-left: 2px; }
.mini .t.d { padding-left: 4px; }
.mini .glyph { width: 18px; }
.menu { position: absolute; display: flex; flex-direction: column; background: #fff; border: 1px solid #ccc; box-shadow: 1px 1px 2px #ccc; }
.menu button { flex: 1; min-height: 0; justify-content: flex-start; gap: 6px; padding: 0 14px 0 7px; color: #333; }
.menu kbd { margin-left: auto; font: inherit; color: #777; }
.menu hr { flex: none; margin: 1px 3px 0 25px; border: 0; height: 1px; background: #e8e8e8; }
.menu .off { color: #bbb; }
.off svg { stroke: #bbb; }
.menu .hot { background: #e5e5e5; padding-right: 6px; }
.side-caret { margin-left: auto; transform: rotate(-90deg); }
.context { left: 433px; top: 277px; width: 193px; height: 252px; }
.sub { left: 623px; top: 486px; width: 123px; height: 42px; }
.mark { position: absolute; left: 621px; top: 490px; width: 126px; height: 39px; border: 2px solid #f52a20; border-radius: 3px; }
.widget { position: absolute; right: 0; top: 496px; width: 8px; height: 44px; border-radius: 3px 0 0 3px; background: #858994; padding: 5px 1px 5px 3px; display: flex; }
.widget i { flex: 1; background: repeating-linear-gradient(transparent 0 1px, #858994 1px 2px), linear-gradient(#666b78 24px, #7fe0b0 24px); }
.watermark { position: absolute; left: 903px; top: 557px; color: #fff; opacity: .75; filter: drop-shadow(0 0 1px #bbb); }
.watermark div { display: flex; align-items: center; gap: 3px; font: 500 28px/38px "Noto Sans CJK SC", sans-serif; }
.watermark svg { width: 38px; height: 38px; }
.watermark p { font: 17px/24px "DejaVu Sans", sans-serif; margin-top: 4px; }
```
